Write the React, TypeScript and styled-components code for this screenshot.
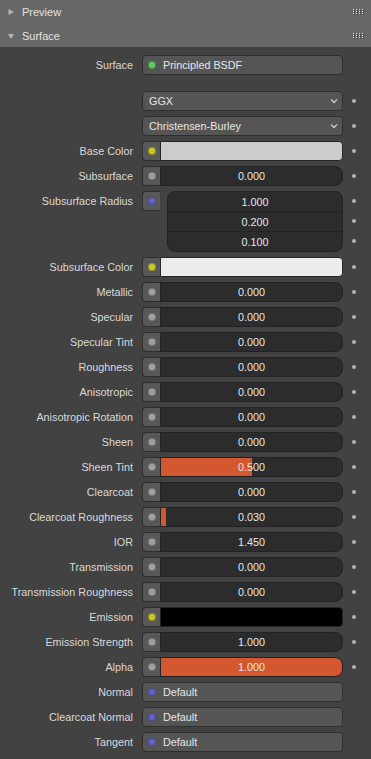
import React from 'react';
import styled, { createGlobalStyle } from 'styled-components';

const GlobalStyle = createGlobalStyle`
  html, body { margin: 0; padding: 0; background: #424242; }
  body {
    font-family: "Liberation Sans", Arial, sans-serif;
    font-size: 10.8px;
    color: #dcdcdc;
  }
`;

const SOCK = {
  float: '#a1a1a1',
  color: '#c7c729',
  vector: '#6363c7',
  shader: '#63c763',
};

const ORANGE = '#d4582f';

const Page = styled.div`
  width: 371px;
  min-height: 759px;
  background: #424242;
`;

const Header = styled.div<{ $h: number }>`
  height: ${(p) => p.$h}px;
  background: #676767;
  display: flex;
  align-items: center;
  padding: 0 7px 0 8px;
  gap: 8px;
  color: #e2e2e2;
  font-size: 11px;
`;

const HeaderTitle = styled.span`
  flex: 1;
`;

const Body = styled.div`
  padding: 8px 0 8px 0;
`;

const Row = styled.div<{ $mb?: number }>`
  display: grid;
  grid-template-columns: 133px 201px 1fr;
  column-gap: 9px;
  align-items: start;
  margin-bottom: ${(p) => (p.$mb ?? 5)}px;
`;

const Label = styled.div`
  text-align: right;
  height: 20px;
  line-height: 20px;
  white-space: nowrap;
  color: #d9d9d9;
`;

const DotColumn = styled.div`
  display: flex;
  flex-direction: column;
`;

const DotCell = styled.div`
  height: 20px;
  display: flex;
  align-items: center;
`;

const AnimDot = styled.div`
  width: 4px;
  height: 4px;
  border-radius: 50%;
  background: #b4b4b4;
`;

const SocketPair = styled.div`
  display: flex;
  align-items: flex-start;
`;

const SocketButton = styled.div`
  box-sizing: border-box;
  width: 18px;
  height: 20px;
  flex: none;
  background: #585858;
  border: 1px solid #2e2e2e;
  border-right: none;
  border-radius: 4px 0 0 4px;
  display: flex;
  align-items: center;
  justify-content: center;
`;

const SocketDot = styled.div<{ $c: string }>`
  box-sizing: border-box;
  width: 8px;
  height: 8px;
  border-radius: 50%;
  background: ${(p) => p.$c};
  border: 1px solid rgba(0, 0, 0, 0.25);
  flex: none;
`;

const NumberField = styled.div`
  box-sizing: border-box;
  position: relative;
  flex: 1;
  height: 20px;
  background: #2c2c2c;
  border: 1px solid #232323;
  border-radius: 0 8px 8px 0;
  overflow: hidden;
  display: flex;
  align-items: center;
  justify-content: center;
  color: #e6e6e6;
`;

const Fill = styled.div`
  position: absolute;
  left: 0;
  top: 0;
  bottom: 0;
  background: ${ORANGE};
`;

const ValueText = styled.span`
  position: relative;
`;

const Swatch = styled.div<{ $c: string }>`
  box-sizing: border-box;
  flex: 1;
  height: 20px;
  background: ${(p) => p.$c};
  border: 1px solid #262626;
  border-radius: 0 4px 4px 0;
`;

const VectorBlock = styled.div`
  box-sizing: border-box;
  margin-left: 7px;
  flex: 1;
  border: 1px solid #232323;
  border-radius: 8px;
  overflow: hidden;
  background: #2c2c2c;
  display: flex;
  flex-direction: column;
`;

const VectorCell = styled.div`
  height: 19px;
  display: flex;
  align-items: center;
  justify-content: center;
  color: #e6e6e6;
  & + & {
    border-top: 1px solid #232323;
  }
`;

const TextField = styled.div`
  box-sizing: border-box;
  height: 20px;
  background: #555555;
  border: 1px solid #2f2f2f;
  border-radius: 4px;
  display: flex;
  align-items: center;
  padding-left: 5px;
  gap: 7px;
  color: #e6e6e6;
`;

const Dropdown = styled.div`
  box-sizing: border-box;
  height: 20px;
  background: #555555;
  border: 1px solid #2f2f2f;
  border-radius: 4px;
  display: flex;
  align-items: center;
  padding: 0 4px 0 6px;
  color: #e6e6e6;
`;

const DropText = styled.span`
  flex: 1;
`;

const Triangle = ({ open }: { open: boolean }) => (
  <svg width="6" height="6" viewBox="0 0 6 6">
    {open ? (
      <polygon points="0,1 6,1 3,6" fill="#b4b4b4" />
    ) : (
      <polygon points="0.5,0 6,3 0.5,6" fill="#b4b4b4" />
    )}
  </svg>
);

const Grip = () => {
  const dots: JSX.Element[] = [];
  for (let r = 0; r < 3; r++) {
    for (let c = 0; c < 4; c++) {
      dots.push(<rect key={`s${r}${c}`} x={c * 3 + 1} y={r * 2 + 1} width="1" height="1" fill="#3c3c3c" />);
      dots.push(<rect key={`d${r}${c}`} x={c * 3} y={r * 2} width="1" height="1" fill="#e8e8e8" />);
    }
  }
  return (
    <svg width="11" height="6" viewBox="0 0 11 6">
      {dots}
    </svg>
  );
};

const Chevron = () => (
  <svg width="8" height="6" viewBox="0 0 8 6">
    <polyline points="1,1.5 4,4.5 7,1.5" fill="none" stroke="#cfcfcf" strokeWidth="1.3" />
  </svg>
);

const Dots = ({ n = 1 }: { n?: number }) => (
  <DotColumn>
    {Array.from({ length: n }).map((_, i) => (
      <DotCell key={i}>
        <AnimDot />
      </DotCell>
    ))}
  </DotColumn>
);

type Item =
  | { kind: 'num'; label: string; value: string; fill?: number }
  | { kind: 'color'; label: string; color: string }
  | { kind: 'vector'; label: string; values: string[] }
  | { kind: 'link'; label: string };

const items: Item[] = [
  { kind: 'color', label: 'Base Color', color: '#cccccc' },
  { kind: 'num', label: 'Subsurface', value: '0.000' },
  { kind: 'vector', label: 'Subsurface Radius', values: ['1.000', '0.200', '0.100'] },
  { kind: 'color', label: 'Subsurface Color', color: '#ececec' },
  { kind: 'num', label: 'Metallic', value: '0.000' },
  { kind: 'num', label: 'Specular', value: '0.000' },
  { kind: 'num', label: 'Specular Tint', value: '0.000' },
  { kind: 'num', label: 'Roughness', value: '0.000' },
  { kind: 'num', label: 'Anisotropic', value: '0.000' },
  { kind: 'num', label: 'Anisotropic Rotation', value: '0.000' },
  { kind: 'num', label: 'Sheen', value: '0.000' },
  { kind: 'num', label: 'Sheen Tint', value: '0.500', fill: 0.5 },
  { kind: 'num', label: 'Clearcoat', value: '0.000' },
  { kind: 'num', label: 'Clearcoat Roughness', value: '0.030', fill: 0.03 },
  { kind: 'num', label: 'IOR', value: '1.450' },
  { kind: 'num', label: 'Transmission', value: '0.000' },
  { kind: 'num', label: 'Transmission Roughness', value: '0.000' },
  { kind: 'color', label: 'Emission', color: '#000000' },
  { kind: 'num', label: 'Emission Strength', value: '1.000' },
  { kind: 'num', label: 'Alpha', value: '1.000', fill: 1 },
  { kind: 'link', label: 'Normal' },
  { kind: 'link', label: 'Clearcoat Normal' },
  { kind: 'link', label: 'Tangent' },
];

const renderItem = (it: Item) => {
  switch (it.kind) {
    case 'num':
      return (
        <Row key={it.label}>
          <Label>{it.label}</Label>
          <SocketPair>
            <SocketButton>
              <SocketDot $c={SOCK.float} />
            </SocketButton>
            <NumberField>
              {it.fill ? <Fill style={{ width: `${it.fill * 100}%` }} /> : null}
              <ValueText>{it.value}</ValueText>
            </NumberField>
          </SocketPair>
          <Dots />
        </Row>
      );
    case 'color':
      return (
        <Row key={it.label}>
          <Label>{it.label}</Label>
          <SocketPair>
            <SocketButton>
              <SocketDot $c={SOCK.color} />
            </SocketButton>
            <Swatch $c={it.color} />
          </SocketPair>
          <Dots />
        </Row>
      );
    case 'vector':
      return (
        <Row key={it.label}>
          <Label>{it.label}</Label>
          <SocketPair>
            <SocketButton>
              <SocketDot $c={SOCK.vector} />
            </SocketButton>
            <VectorBlock>
              {it.values.map((v, i) => (
                <VectorCell key={i}>{v}</VectorCell>
              ))}
            </VectorBlock>
          </SocketPair>
          <Dots n={3} />
        </Row>
      );
    case 'link':
      return (
        <Row key={it.label}>
          <Label>{it.label}</Label>
          <TextField>
            <SocketDot $c={SOCK.vector} />
            <span>Default</span>
          </TextField>
          <div />
        </Row>
      );
  }
};

export default function App() {
  return (
    <Page>
      <GlobalStyle />
      <Header $h={24}>
        <Triangle open={false} />
        <HeaderTitle>Preview</HeaderTitle>
        <Grip />
      </Header>
      <Header $h={23}>
        <Triangle open={true} />
        <HeaderTitle>Surface</HeaderTitle>
        <Grip />
      </Header>
      <Body>
        <Row $mb={16}>
          <Label>Surface</Label>
          <TextField>
            <SocketDot $c={SOCK.shader} />
            <span>Principled BSDF</span>
          </TextField>
          <div />
        </Row>
        <Row>
          <div />
          <Dropdown>
            <DropText>GGX</DropText>
            <Chevron />
          </Dropdown>
          <Dots />
        </Row>
        <Row>
          <div />
          <Dropdown>
            <DropText>Christensen-Burley</DropText>
            <Chevron />
          </Dropdown>
          <Dots />
        </Row>
        {items.map(renderItem)}
      </Body>
    </Page>
  );
}
